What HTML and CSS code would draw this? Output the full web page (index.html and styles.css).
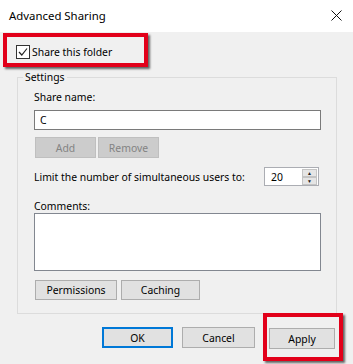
FILE: index.html
```
<!DOCTYPE html>
<html>

<head>
    <title>Advanced Sharing</title>
    <meta charset="UTF-8">
    <link rel="stylesheet" href="styles.css">
</head>

<body>
    <div class="dialog">
        <div class="titlebar">
            <span class="title">Advanced Sharing</span>
            <svg class="close" width="11" height="11" viewBox="0 0 11 11">
                <path d="M0.5 0.5 L10.5 10.5 M10.5 0.5 L0.5 10.5" stroke="#111" stroke-width="1" fill="none" />
            </svg>
        </div>

        <div class="mark share-mark">
            <label class="check-row">
                <span class="checkbox">
                    <svg width="12" height="12" viewBox="0 0 12 12">
                        <path d="M2 6 L4.8 9 L10 2.5" stroke="#222" stroke-width="1.2" fill="none" />
                    </svg>
                </span>
                <span>Share this folder</span>
            </label>
        </div>

        <fieldset class="group">
            <legend>Settings</legend>
            <div class="group-body">
                <div class="field-label">Share name:</div>
                <div class="textbox">C</div>
                <div class="btn-row">
                    <button class="btn disabled btn-add">Add</button>
                    <button class="btn disabled btn-remove">Remove</button>
                </div>
                <div class="limit-row">
                    <span>Limit the number of simultaneous users to:</span>
                    <div class="spinner">
                        <span class="spin-value">20</span>
                        <div class="spin-buttons">
                            <span class="spin-btn">&#9650;</span>
                            <span class="spin-btn">&#9660;</span>
                        </div>
                    </div>
                </div>
                <div class="field-label comments-label">Comments:</div>
                <div class="textarea"></div>
                <div class="btn-row bottom-row">
                    <button class="btn btn-perm">Permissions</button>
                    <button class="btn btn-cache">Caching</button>
                </div>
            </div>
        </fieldset>

        <div class="footer">
            <button class="btn btn-ok">OK</button>
            <button class="btn btn-cancel">Cancel</button>
            <div class="mark apply-mark">
                <button class="btn btn-apply">Apply</button>
            </div>
        </div>
    </div>
</body>

</html>
```

FILE: styles.css
```
html,
body {
    margin: 0;
    padding: 0;
}

body {
    width: 353px;
    height: 364px;
    overflow: hidden;
    background-color: #f0f0f0;
    font-family: "Noto Sans", "Open Sans", sans-serif;
    font-size: 10.4px;
    color: #000;
}

.dialog {
    width: 353px;
    height: 364px;
}

.titlebar {
    height: 32px;
    background-color: #fff;
    display: flex;
    align-items: center;
    justify-content: space-between;
    padding: 0 11px 0 9px;
}

.title {
    font-size: 11.4px;
    margin-top: -1px;
}

.close {
    margin-top: -1px;
}

/* red annotation boxes */
.mark {
    border: 4px solid #e2001a;
    box-shadow: 2px 2px 2px rgba(40, 40, 40, 0.7);
    box-sizing: border-box;
}

.share-mark {
    width: 145px;
    height: 34px;
    margin: 1px 0 0 3px;
    display: flex;
    align-items: center;
    padding: 4px 0 0 9px;
}

.check-row {
    display: flex;
    align-items: center;
    gap: 2px;
}

.checkbox {
    width: 12px;
    height: 12px;
    border: 1px solid #333;
    background-color: #fff;
    display: flex;
}

.group {
    margin: 3px 16px 0 17px;
    padding: 0 15px 13px 5px;
    border: 1px solid #dcdcdc;
    min-width: 0;
}

.group legend {
    padding: 0 2px;
    line-height: 14px;
}

.group-body {
    padding-left: 11px;
}

.field-label {
    line-height: 14px;
    margin-top: 6px;
}

.textbox {
    margin-top: 6px;
    height: 20px;
    box-sizing: border-box;
    border: 1px solid #7a7a7a;
    background-color: #fff;
    padding-left: 5px;
    line-height: 18px;
}

.btn-row {
    display: flex;
    margin-top: 7px;
    padding-left: 1px;
}

.btn {
    font-family: inherit;
    font-size: inherit;
    color: #000;
    background-color: #e1e1e1;
    border: 1px solid #adadad;
    box-sizing: border-box;
    height: 21px;
    padding: 0;
    margin: 0;
}

.btn.disabled {
    background-color: #cccccc;
    border-color: #bfbfbf;
    color: #838383;
}

.btn-add,
.btn-remove {
    width: 61px;
}

.btn-remove {
    margin-left: 2px;
}

.limit-row {
    display: flex;
    align-items: center;
    justify-content: space-between;
    margin-top: 9px;
    padding-right: 2px;
}

.spinner {
    width: 55px;
    height: 19px;
    box-sizing: border-box;
    border: 1px solid #abadb3;
    background-color: #fff;
    display: flex;
    justify-content: space-between;
}

.spin-value {
    padding-left: 6px;
    line-height: 18px;
}

.spin-buttons {
    width: 15px;
    display: flex;
    flex-direction: column;
    margin: 1px;
}

.spin-btn {
    flex: 1;
    background-color: #e5e5e5;
    border: 1px solid #c4c4c4;
    font-size: 5px;
    line-height: 6px;
    text-align: center;
    color: #222;
}

.comments-label {
    margin-top: 14px;
    line-height: 13px;
}

.textarea {
    height: 58px;
    box-sizing: border-box;
    border: 1px solid #828790;
    background-color: #fff;
}

.bottom-row {
    margin-top: 9px;
}

.bottom-row .btn {
    height: 20px;
}

.btn-perm {
    width: 82px;
}

.btn-cache {
    width: 79px;
    margin-left: 4px;
}

.footer {
    display: flex;
    align-items: flex-start;
    padding-left: 102px;
}

.btn-ok {
    width: 71px;
    margin-top: 13px;
    border: 2px solid #0078d7;
}

.btn-cancel {
    width: 73px;
    margin: 13px 0 0 9px;
}

.apply-mark {
    margin: -1px 0 0 8px;
    padding: 11px 4px 8px 2px;
}

.btn-apply {
    width: 66px;
}
```
